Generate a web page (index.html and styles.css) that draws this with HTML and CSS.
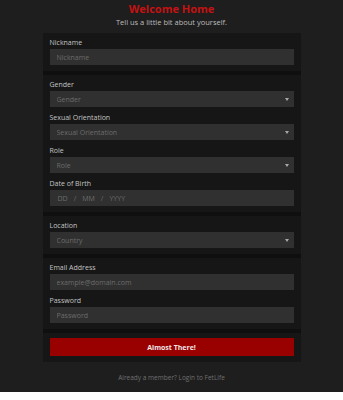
FILE: index.html
```html
<!DOCTYPE html>
<html lang="en">
<head>
    <meta charset="UTF-8">
    <meta name="viewport" content="width=device-width, initial-scale=1.0">
    <title>Welcome Home</title>
    <link rel="stylesheet" href="styles.css">
</head>
<body>
    <div class="page">
        <h1 class="title">Welcome Home</h1>
        <p class="subtitle">Tell us a little bit about yourself.</p>

        <form class="signup">
            <div class="section">
                <div class="field">
                    <label for="nickname">Nickname</label>
                    <input type="text" id="nickname" placeholder="Nickname">
                </div>
            </div>

            <div class="section">
                <div class="field">
                    <label for="gender">Gender</label>
                    <div class="select-wrap">
                        <select id="gender"><option>Gender</option></select>
                    </div>
                </div>
                <div class="field">
                    <label for="orientation">Sexual Orientation</label>
                    <div class="select-wrap">
                        <select id="orientation"><option>Sexual Orientation</option></select>
                    </div>
                </div>
                <div class="field">
                    <label for="role">Role</label>
                    <div class="select-wrap">
                        <select id="role"><option>Role</option></select>
                    </div>
                </div>
                <div class="field">
                    <label for="dob-day">Date of Birth</label>
                    <div class="date-input">
                        <span class="date-part">DD</span>
                        <span class="date-sep">/</span>
                        <span class="date-part">MM</span>
                        <span class="date-sep">/</span>
                        <span class="date-part">YYYY</span>
                    </div>
                </div>
            </div>

            <div class="section">
                <div class="field">
                    <label for="country">Location</label>
                    <div class="select-wrap">
                        <select id="country"><option>Country</option></select>
                    </div>
                </div>
            </div>

            <div class="section">
                <div class="field">
                    <label for="email">Email Address</label>
                    <input type="email" id="email" placeholder="example@domain.com">
                </div>
                <div class="field">
                    <label for="password">Password</label>
                    <input type="password" id="password" placeholder="Password">
                </div>
            </div>

            <div class="section section-submit">
                <button type="button" class="button-submit">Almost There!</button>
            </div>
        </form>

        <p class="footer">Already a member? <a href="#">Login to FetLife</a></p>
    </div>
</body>
</html>
```

FILE: styles.css
```css
:root {
    --page-bg: #1e1e1e;
    --panel-bg: #0f0f0f;
    --section-bg: #161616;
    --input-bg: #303030;
    --label-color: #c4c4c4;
    --placeholder-color: #6c6c6c;
    --accent-red: #c41212;
    --button-red: #990000;
}

html {
    background-color: #ffffff;
}

body {
    margin: 0;
    font-family: 'Open Sans', 'DejaVu Sans', sans-serif;
}

.page {
    height: 392px;
    box-sizing: border-box;
    padding-top: 2px;
    background-color: var(--page-bg);
}

.title {
    margin: 0;
    text-align: center;
    color: var(--accent-red);
    font-size: 11px;
    line-height: 14px;
    font-weight: 700;
}

.subtitle {
    margin: 1px 0 0;
    text-align: center;
    color: #bdbdbd;
    font-size: 7.5px;
    line-height: 10px;
}

.signup {
    width: 258px;
    margin: 6px auto 0;
    background-color: var(--panel-bg);
    display: flex;
    flex-direction: column;
    gap: 4px;
}

.section {
    background-color: var(--section-bg);
    padding: 5px 7px 6px;
}

.field + .field {
    margin-top: 6px;
}

.field label {
    display: block;
    color: var(--label-color);
    font-size: 7px;
    line-height: 10px;
    margin-bottom: 1px;
}

.field input,
.field select,
.date-input {
    display: block;
    width: 100%;
    height: 16px;
    box-sizing: border-box;
    margin: 0;
    padding: 0 7px;
    border: none;
    border-radius: 0;
    outline: none;
    background-color: var(--input-bg);
    color: var(--placeholder-color);
    font-family: inherit;
    font-size: 7px;
}

.field input::placeholder {
    color: var(--placeholder-color);
}

.select-wrap {
    position: relative;
}

.field select {
    appearance: none;
    -webkit-appearance: none;
}

.select-wrap::after {
    content: "";
    position: absolute;
    right: 5px;
    top: 7px;
    border-left: 2.5px solid transparent;
    border-right: 2.5px solid transparent;
    border-top: 3px solid #a8a8a8;
}

.date-input {
    display: flex;
    align-items: center;
    gap: 6px;
    padding-left: 8px;
}

.section-submit {
    padding-top: 5px;
}

.button-submit {
    display: block;
    width: 100%;
    height: 18px;
    padding: 0;
    border: none;
    background-color: var(--button-red);
    color: #f0e6e6;
    font-family: inherit;
    font-size: 7px;
    font-weight: 700;
    cursor: pointer;
}

.footer {
    margin: 11px 0 0;
    text-align: center;
    font-size: 6.5px;
    line-height: 10px;
    color: #707070;
}

.footer a {
    color: #707070;
    text-decoration: none;
}
```
